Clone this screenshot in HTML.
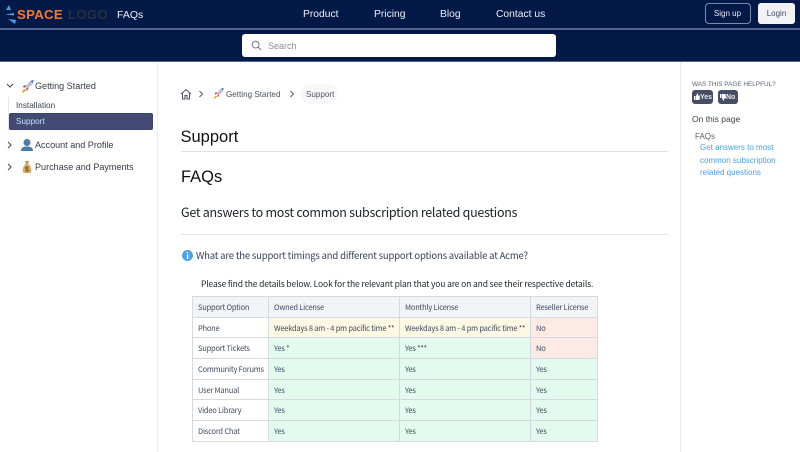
<!DOCTYPE html>
<html><head><meta charset="utf-8"><style>
*{box-sizing:border-box}
html,body{margin:0;padding:0;width:800px;height:452px;overflow:hidden;background:#fff;font-family:"Liberation Sans",sans-serif}
.a{position:absolute;white-space:nowrap}
.n{font-family:"Noto Sans CJK SC","Liberation Sans",sans-serif}
table{position:absolute;left:192px;top:296px;width:405px;height:145px;border-collapse:collapse;table-layout:fixed;font-family:"Noto Sans CJK SC","Liberation Sans",sans-serif;font-size:7.5px;letter-spacing:-.22px;color:#3f4a5e}
td{border:1px solid #d5d9e2;padding:1px 0 0 5px;height:20.7px;white-space:nowrap;overflow:hidden}
.h{background:#f3f4f8}.y{background:#fdf8e3}.g{background:#e3fbef}.r{background:#fdeae4}
</style></head><body>
<div class="a" style="left:0;top:0;width:800px;height:61px;background:#031a48"></div>
<div class="a" style="left:0;top:28px;width:800px;height:1.5px;background:#56628a"></div>
<div class="a" style="left:0;top:60.5px;width:800px;height:1px;background:#56628a"></div>

<svg class="a" style="left:4px;top:4px" width="13" height="21" viewBox="0 0 13 21"><path d="M5 1 7 6 2 6Z" fill="#4a9be0"/><path d="M1 10.500 10 9 10 11.500Z" fill="#4a9be0"/><path d="M4 15 12 16 11 20Z" fill="#4a9be0"/></svg>
<div class="a" style="left:17px;top:5.500px;font-size:13.200px;font-weight:bold;color:#f47a2c;letter-spacing:.3px;line-height:18px">SPACE</div>
<div class="a" style="left:68px;top:5.500px;font-size:13.200px;font-weight:bold;color:#2a2f3d;letter-spacing:.3px;line-height:18px">LOGO</div>
<div class="a" style="left:117px;top:7px;font-size:10.500px;color:#eef0f6;line-height:16px">FAQs</div>

<div class="a" style="left:303px;top:7px;font-size:10.300px;color:#eef0f6;line-height:16px">Product</div>
<div class="a" style="left:374px;top:7px;font-size:10.300px;color:#eef0f6;line-height:16px">Pricing</div>
<div class="a" style="left:440px;top:7px;font-size:10.300px;color:#eef0f6;line-height:16px">Blog</div>
<div class="a" style="left:496px;top:7px;font-size:10.300px;color:#eef0f6;line-height:16px">Contact us</div>

<div class="a" style="left:704.500px;top:3px;width:46px;height:21px;border:1px solid #7f8aa8;border-radius:4px;color:#e6e9f2;font-size:8px;text-align:center;line-height:19px">Sign up</div>
<div class="a" style="left:758px;top:3px;width:37px;height:21px;background:#f2f3f5;border-radius:3px;color:#3f4a66;font-size:8px;text-align:center;line-height:21px">Login</div>

<div class="a" style="left:242px;top:34px;width:314px;height:23px;background:#fff;border-radius:3px"></div>
<svg class="a" style="left:251px;top:40px" width="11" height="11" viewBox="0 0 11 11" fill="none" stroke="#7a818f" stroke-width="1.100"><circle cx="4.600" cy="4.600" r="3.400"/><path d="M7.200 7.200 10 10"/></svg>
<div class="a" style="left:268px;top:38.500px;font-size:9px;color:#8a8f9a;line-height:14px">Search</div>

<div class="a" style="left:157px;top:62px;width:1px;height:390px;background:#eceef1"></div>
<div class="a" style="left:680px;top:62px;width:1px;height:390px;background:#e6e8ec"></div>

<svg class="a" style="left:6px;top:83px" width="8" height="6" viewBox="0 0 8 6" fill="none" stroke="#444" stroke-width="1"><path d="M1 1 4 4 7 1"/></svg>
<svg class="a" style="left:21px;top:79px" width="13" height="14" viewBox="0 0 13 14"><path d="M4 8 9 2 12.500 1 12 5 6 10Z" fill="#b9c3d1"/><path d="M9.500 2 12.500 1 12 4Z" fill="#3a6fb5"/><path d="M4 6 2 7 3 9 5 7ZM6 9 7.500 9 6 12 5 10.500Z" fill="#d8412f"/><path d="M3 10 5 11 2 14 1 13Z" fill="#f29a2e"/></svg>
<div class="a" style="left:35px;top:79px;font-size:9.050px;color:#333a48;line-height:14px">Getting Started</div>
<div class="a" style="left:8px;top:97px;width:1px;height:33px;background:#e3e5ea"></div>
<div class="a" style="left:16px;top:99.500px;font-size:8.200px;color:#3b4252;line-height:12px">Installation</div>
<div class="a" style="left:9px;top:113px;width:144px;height:16.500px;background:#434b74;border-radius:2px;border:1px solid #3b4470"></div>
<div class="a" style="left:16px;top:115.500px;font-size:8.200px;color:#c6e2f8;line-height:12px">Support</div>

<svg class="a" style="left:7px;top:141px" width="6" height="8" viewBox="0 0 6 8" fill="none" stroke="#444" stroke-width="1"><path d="M1 1 4 4 1 7"/></svg>
<svg class="a" style="left:20px;top:138px" width="14" height="14" viewBox="0 0 14 14"><circle cx="7" cy="4.500" r="3.500" fill="#4d7ba8"/><path d="M1 13C1 9 4 8.500 7 8.500S13 9 13 13Z" fill="#4d7ba8"/></svg>
<div class="a" style="left:35px;top:138px;font-size:9.050px;color:#333a48;line-height:14px">Account and Profile</div>

<svg class="a" style="left:7px;top:163px" width="6" height="8" viewBox="0 0 6 8" fill="none" stroke="#444" stroke-width="1"><path d="M1 1 4 4 1 7"/></svg>
<svg class="a" style="left:21px;top:160px" width="12" height="14" viewBox="0 0 12 14"><path d="M4 1 8 1 7 4 5 4Z" fill="#c99a55"/><path d="M5 4C1 6 1 13 3 13L9 13C11 13 11 6 7 4Z" fill="#d9ad68"/><text x="6" y="11.500" font-size="7" font-weight="bold" text-anchor="middle" fill="#6b4a20">$</text></svg>
<div class="a" style="left:35px;top:160px;font-size:9.050px;color:#333a48;line-height:14px">Purchase and Payments</div>

<svg class="a" style="left:180px;top:88px" width="12" height="12" viewBox="0 0 12 12" fill="none" stroke="#4a5264" stroke-width="1"><path d="M1 6 6 1.500 11 6M2.500 5V11H5V7.500H7V11H9.500V5"/></svg>
<svg class="a" style="left:198px;top:90px" width="6" height="8" viewBox="0 0 6 8" fill="none" stroke="#555d6e" stroke-width="1"><path d="M1.500 1 4.500 4 1.500 7"/></svg>
<svg class="a" style="left:213px;top:87px" width="11" height="12" viewBox="0 0 13 14"><path d="M4 8 9 2 12.500 1 12 5 6 10Z" fill="#b9c3d1"/><path d="M9.500 2 12.500 1 12 4Z" fill="#3a6fb5"/><path d="M4 6 2 7 3 9 5 7ZM6 9 7.500 9 6 12 5 10.500Z" fill="#d8412f"/><path d="M3 10 5 11 2 14 1 13Z" fill="#f29a2e"/></svg>
<div class="a" style="left:226px;top:88.500px;font-size:8.100px;color:#4a5264;line-height:12px">Getting Started</div>
<svg class="a" style="left:289px;top:90px" width="6" height="8" viewBox="0 0 6 8" fill="none" stroke="#555d6e" stroke-width="1"><path d="M1.500 1 4.500 4 1.500 7"/></svg>
<div class="a" style="left:301px;top:84px;width:37px;height:20px;border-radius:10px;background:#f8f8fa"></div>
<div class="a" style="left:306px;top:88.500px;font-size:8.100px;color:#4a5264;line-height:12px">Support</div>

<div class="a" style="left:180.500px;top:125px;font-size:16.500px;color:#111;line-height:24px">Support</div>
<div class="a" style="left:181px;top:151px;width:487px;height:1px;background:#dfe1e5"></div>
<div class="a" style="left:181px;top:164px;font-size:16.500px;color:#111;line-height:26px">FAQs</div>
<div class="a n" style="left:181px;top:202px;font-size:12.500px;letter-spacing:-.28px;color:#1d2129;line-height:20px">Get answers to most common subscription related questions</div>
<div class="a" style="left:181px;top:234px;width:487px;height:1px;background:#e4e6ea"></div>

<svg class="a" style="left:182px;top:250px" width="11" height="11" viewBox="0 0 11 11"><circle cx="5.500" cy="5.500" r="5.500" fill="#4da3e8"/><rect x="4.800" y="4.500" width="1.500" height="4.500" fill="#fff"/><rect x="4.800" y="2" width="1.500" height="1.500" fill="#fff"/></svg>
<div class="a n" style="left:196px;top:248px;font-size:9.500px;letter-spacing:-.17px;color:#36405a;line-height:15px">What are the support timings and different support options available at Acme?</div>
<div class="a n" style="left:201px;top:277px;font-size:8.500px;letter-spacing:-.13px;color:#1d2129;line-height:14px">Please find the details below. Look for the relevant plan that you are on and see their respective details.</div>

<table>
<colgroup><col style="width:76px"><col style="width:131px"><col style="width:131px"><col style="width:67px"></colgroup>
<tr><td class="h">Support Option</td><td class="h">Owned License</td><td class="h">Monthly License</td><td class="h">Reseller License</td></tr>
<tr><td>Phone</td><td class="y">Weekdays 8 am - 4 pm pacific time **</td><td class="y">Weekdays 8 am - 4 pm pacific time **</td><td class="r">No</td></tr>
<tr><td>Support Tickets</td><td class="g">Yes *</td><td class="g">Yes ***</td><td class="r">No</td></tr>
<tr><td>Community Forums</td><td class="g">Yes</td><td class="g">Yes</td><td class="g">Yes</td></tr>
<tr><td>User Manual</td><td class="g">Yes</td><td class="g">Yes</td><td class="g">Yes</td></tr>
<tr><td>Video Library</td><td class="g">Yes</td><td class="g">Yes</td><td class="g">Yes</td></tr>
<tr><td>Discord Chat</td><td class="g">Yes</td><td class="g">Yes</td><td class="g">Yes</td></tr>
</table>

<div class="a" style="left:692px;top:79.500px;font-size:6.400px;color:#5b6375;line-height:10px">WAS THIS PAGE HELPFUL?</div>
<div class="a" style="left:692px;top:90px;width:21px;height:14px;background:#474d63;border-radius:3px"></div>
<div class="a" style="left:718px;top:90px;width:20px;height:14px;background:#474d63;border-radius:3px"></div>
<svg class="a" style="left:694px;top:93px" width="6" height="7" viewBox="0 0 6 7"><path d="M0 3H1.500V7H0ZM2 3 3.500 0 4 .5V2.500H6L5.500 7H2Z" fill="#fff"/></svg>
<div class="a" style="left:700px;top:92px;font-size:7px;font-weight:bold;color:#e8eaf0;line-height:12px">Yes</div>
<svg class="a" style="left:720px;top:94px" width="6" height="7" viewBox="0 0 6 7"><path d="M0 0H1.500V4H0ZM2 0H5.500L6 4.500H4V6.500L3.500 7 2 4Z" fill="#fff"/></svg>
<div class="a" style="left:726px;top:92px;font-size:7px;font-weight:bold;color:#e8eaf0;line-height:12px">No</div>
<div class="a" style="left:692px;top:113px;font-size:8.500px;color:#3b3f4a;line-height:13px">On this page</div>
<div class="a" style="left:695px;top:131px;font-size:8px;color:#5a606c;line-height:12px">FAQs</div>
<div class="a" style="left:700px;top:142px;font-size:8px;color:#4a9df0;line-height:12.500px">Get answers to most<br>common subscription<br>related questions</div>
</body></html>
